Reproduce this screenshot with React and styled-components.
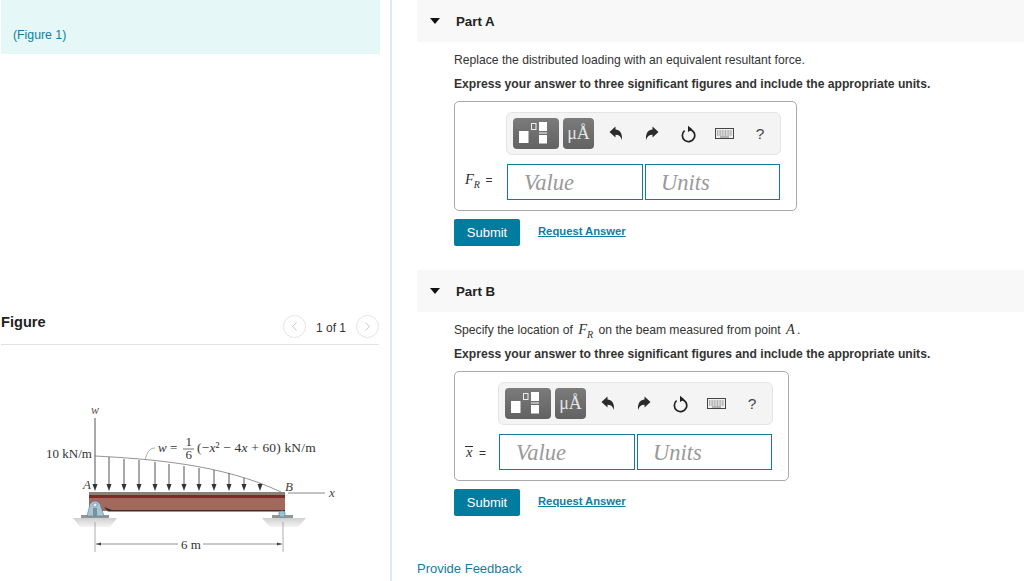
import styled, { createGlobalStyle } from "styled-components";
import { ChevronLeft, ChevronRight } from "lucide-react";

const GlobalStyle = createGlobalStyle`
  html, body {
    margin: 0;
    padding: 0;
    background: #fff;
    overflow: hidden;
  }
  body {
    font-family: "Liberation Sans", Arial, sans-serif;
    color: #222;
  }
`;

const arrowXs = [95, 109, 124, 139, 155, 169, 184, 199, 214, 229, 244, 260];
const arrowTops = [418, 457, 459, 460, 462, 464, 466, 468, 470, 473, 478, 483];

function BeamDiagram() {
  return (
    <DiagramSvg viewBox="0 390 340 170" width="340" height="170">
      <defs>
        <linearGradient id="ground" x1="0" y1="0" x2="0" y2="1">
          <stop offset="0" stopColor="#cfcfcf" />
          <stop offset="1" stopColor="#f4f4f4" />
        </linearGradient>
      </defs>
      <text x="91" y="414" fontSize="12" fontStyle="italic" fill="#555">w</text>
      <text x="46" y="458" fontSize="13" fill="#333">10 kN/m</text>
      <path d="M95 456 C150 459 222 464 281 492" fill="none" stroke="#777" strokeWidth="0.8" />
      <path d="M155 448 C149 448 147 453 145 460" fill="none" stroke="#888" strokeWidth="0.7" />
      <text x="158" y="452" fontSize="13" fill="#333">
        <tspan fontStyle="italic">w</tspan> =
      </text>
      <line x1="183" y1="449" x2="194" y2="449" stroke="#333" strokeWidth="0.7" />
      <text x="185.5" y="446" fontSize="13" fill="#333">1</text>
      <text x="185.5" y="459" fontSize="13" fill="#333">6</text>
      <text x="197" y="452" fontSize="13.5" letterSpacing="0.15" fill="#333">
        (−<tspan fontStyle="italic">x</tspan>² − 4<tspan fontStyle="italic">x</tspan> + 60) kN/m
      </text>
      {arrowXs.map((x, i) => (
        <g key={x}>
          <line x1={x} y1={arrowTops[i]} x2={x} y2="487" stroke="#555" strokeWidth="1" />
          <path d={`M${x - 2.5} 484 L${x + 2.5} 484 L${x} 491 Z`} fill="#333" />
        </g>
      ))}
      <text x="83" y="489" fontSize="13" fontStyle="italic" fill="#444">A</text>
      <text x="285" y="491" fontSize="13" fontStyle="italic" fill="#444">B</text>
      <line x1="288" y1="493" x2="325" y2="493" stroke="#888" strokeWidth="1" />
      <text x="329" y="497" fontSize="13" fontStyle="italic" fill="#444">x</text>

      <rect x="89" y="492" width="196" height="19" fill="#a2685c" />
      <rect x="89" y="492" width="196" height="3" fill="#8c8177" />
      <rect x="89" y="495" width="196" height="3" fill="#7c2b26" />
      <path d="M104 507 L112 510 H285 V511.5 H108 Z" fill="#3b2f2c" />

      <path d="M73 518 H117 L110 527 H80 Z" fill="url(#ground)" />
      <rect x="81" y="515" width="28" height="3" fill="#8f979b" />
      <path d="M87 516 L90 504 Q95 498 100 504 L104 516 Z" fill="#a5c6d6" stroke="#5a7f90" strokeWidth="0.6" />
      <circle cx="95" cy="505" r="2" fill="#e8eef0" stroke="#667" strokeWidth="0.5" />
      <rect x="93" y="508" width="4" height="8" fill="#7f8f98" />

      <path d="M262 518 H306 L298 527 H270 Z" fill="url(#ground)" />
      <rect x="272" y="515" width="21" height="3" fill="#8f979b" />
      <circle cx="282" cy="514" r="3.2" fill="#9cc3d3" stroke="#5a7f90" strokeWidth="0.6" />

      <line x1="95" y1="522" x2="95" y2="552" stroke="#999" strokeWidth="0.8" />
      <line x1="283" y1="522" x2="283" y2="552" stroke="#999" strokeWidth="0.8" />
      <line x1="96" y1="544" x2="178" y2="544" stroke="#777" strokeWidth="0.8" />
      <line x1="203" y1="544" x2="282" y2="544" stroke="#777" strokeWidth="0.8" />
      <path d="M96 544 l5 -1.5 v3 Z M282 544 l-5 -1.5 v3 Z" fill="#444" />
      <text x="181" y="549" fontSize="13" fill="#333">6 m</text>
    </DiagramSvg>
  );
}

function TemplateIcon() {
  return (
    <svg width="46" height="31" viewBox="0 0 46 31">
      <rect x="6" y="13" width="9.5" height="12" fill="#fff" />
      <rect x="18.5" y="5.5" width="4.5" height="6" fill="none" stroke="#eee" strokeWidth="1" />
      <rect x="26" y="4" width="8" height="9" fill="#fff" />
      <rect x="26" y="14.5" width="8" height="1" fill="#fff" />
      <rect x="26" y="17" width="8" height="8.5" fill="#fff" />
    </svg>
  );
}

function ArrowIcon({ flip }) {
  return (
    <svg width="14" height="15" viewBox="0 0 14 15" style={{ transform: flip ? "scaleX(-1)" : "none" }}>
      <path d="M0.5 6 L6.5 0.5 V3.6 C10.5 3.6 13.5 7 13 14 C11.8 10.6 10 8.7 6.5 8.7 V11.5 Z" fill="#2b2b2b" />
    </svg>
  );
}

function ResetIcon() {
  return (
    <svg width="17" height="18" viewBox="0 0 17 18">
      <path d="M9.6 4.3 A6.2 6.2 0 1 1 4.6 5.6" fill="none" stroke="#222" strokeWidth="1.7" />
      <path d="M8 0.8 L12.4 4.2 L8 7 Z" fill="#222" />
    </svg>
  );
}

function KeyboardIcon() {
  return (
    <svg width="19" height="11" viewBox="0 0 19 11">
      <rect x="0.5" y="0.5" width="18" height="10" fill="#efefef" stroke="#444" strokeWidth="1" />
      <path d="M2 3 H17 M2 5 H17 M2 7 H17" stroke="#777" strokeWidth="1" strokeDasharray="1 0.6" />
      <path d="M5 9 H14" stroke="#777" strokeWidth="1" />
    </svg>
  );
}

function AnswerBox({ label }) {
  return (
    <Box>
      <LabelCell>{label}</LabelCell>
      <Fields>
        <Toolbar>
          <DarkButton $width={46}>
            <TemplateIcon />
          </DarkButton>
          <DarkButton $width={31}>
            <UnitGlyph>μÅ</UnitGlyph>
          </DarkButton>
          <Tools>
            <ToolSlot><ArrowIcon /></ToolSlot>
            <ToolSlot><ArrowIcon flip /></ToolSlot>
            <ToolSlot><ResetIcon /></ToolSlot>
            <ToolSlot><KeyboardIcon /></ToolSlot>
            <ToolSlot><Help>?</Help></ToolSlot>
          </Tools>
        </Toolbar>
        <Inputs>
          <FieldInput $width={136} placeholder="Value" readOnly />
          <FieldInput $width={135} $indent={15} placeholder="Units" readOnly />
        </Inputs>
      </Fields>
    </Box>
  );
}

function Part({ name, children, label }) {
  return (
    <section>
      <PartHeader>
        <Caret />
        {name}
      </PartHeader>
      <PartBody>
        {children}
        <Instruction>Express your answer to three significant figures and include the appropriate units.</Instruction>
        <AnswerBox label={label} />
        <Actions>
          <SubmitButton>Submit</SubmitButton>
          <RequestLink href="#">Request Answer</RequestLink>
        </Actions>
      </PartBody>
    </section>
  );
}

export default function App() {
  return (
    <Page>
      <GlobalStyle />
      <LeftColumn>
        <FigureLinkBar>
          <FigureLink href="#">(Figure 1)</FigureLink>
        </FigureLinkBar>
        <FigureHeader>
          <FigureTitle>Figure</FigureTitle>
          <Pager>
            <PagerButton><ChevronLeft size={15} strokeWidth={1.2} /></PagerButton>
            <PagerText>1 of 1</PagerText>
            <PagerButton><ChevronRight size={15} strokeWidth={1.2} /></PagerButton>
          </Pager>
        </FigureHeader>
        <BeamDiagram />
      </LeftColumn>
      <RightColumn>
        <Part
          name="Part A"
          label={
            <LabelFormula $width={41} $lift={5}>
              <i>F<sub>R</sub></i> <span>=</span>
            </LabelFormula>
          }
        >
          <Prompt>Replace the distributed loading with an equivalent resultant force.</Prompt>
        </Part>
        <PartGap />
        <Part
          name="Part B"
          label={
            <LabelFormula $width={33} $lift={0}>
              <Overline>x</Overline> <span>=</span>
            </LabelFormula>
          }
        >
          <Prompt>
            Specify the location of <Formula><i>F<sub>R</sub></i></Formula> on the beam measured from point{" "}
            <Formula><i>A</i></Formula>.
          </Prompt>
        </Part>
        <Feedback href="#">Provide Feedback</Feedback>
      </RightColumn>
    </Page>
  );
}

const Page = styled.div`
  display: grid;
  grid-template-columns: 392px 632px;
  width: 1024px;
  height: 581px;
  overflow: hidden;
`;

const LeftColumn = styled.div`
  border-right: 2px solid #dfe9f2;
  padding-left: 1px;
  box-sizing: border-box;
`;

const FigureLinkBar = styled.div`
  width: 379px;
  height: 54px;
  background: #e5f7f7;
  padding: 27px 0 0 12px;
  box-sizing: border-box;
  line-height: 14px;
`;

const FigureLink = styled.a`
  color: #0f7ea3;
  font-size: 12.3px;
  text-decoration: none;
`;

const FigureHeader = styled.div`
  width: 378px;
  height: 42px;
  margin-top: 248px;
  border-bottom: 1px solid #e2e2e2;
  display: flex;
  align-items: center;
  justify-content: space-between;
`;

const FigureTitle = styled.h3`
  margin: -2px 0 0;
  font-size: 14.6px;
  font-weight: 700;
  color: #222;
`;

const Pager = styled.div`
  display: flex;
  align-items: center;
  gap: 10px;
  margin-top: 6px;
`;

const PagerText = styled.span`
  font-size: 12px;
  color: #333;
  margin-top: 3px;
`;

const PagerButton = styled.span`
  display: flex;
  align-items: center;
  justify-content: center;
  width: 23px;
  height: 23px;
  border: 1px solid #e4e4e4;
  border-radius: 50%;
  color: #b5b5b5;
  box-sizing: border-box;
`;

const DiagramSvg = styled.svg`
  display: block;
  margin: 45px 0 0 -1px;
  font-family: "Liberation Serif", "Times New Roman", serif;
`;

const RightColumn = styled.div`
  padding-left: 25px;
`;

const PartHeader = styled.div`
  height: 42px;
  background: #f8f8f8;
  display: flex;
  align-items: center;
  font-size: 13.3px;
  font-weight: 700;
  color: #222;
  padding-left: 13px;
`;

const Caret = styled.span`
  width: 0;
  height: 0;
  border-left: 5.5px solid transparent;
  border-right: 5.5px solid transparent;
  border-top: 6px solid #111;
  margin-right: 16px;
`;

const PartBody = styled.div`
  padding-left: 37px;
`;

const PartGap = styled.div`
  height: 24px;
`;

const Prompt = styled.p`
  margin: 0;
  height: 24px;
  padding-top: 12px;
  font-size: 12.15px;
  line-height: 13px;
  color: #333;
  white-space: nowrap;
`;

const Instruction = styled.p`
  margin: 0;
  height: 23px;
  font-size: 12.15px;
  line-height: 13px;
  font-weight: 700;
  color: #333;
`;

const Box = styled.div`
  display: inline-flex;
  height: 110px;
  box-sizing: border-box;
  border: 1px solid #aaa;
  border-radius: 5px;
  padding: 10px 15px 10px 10px;
  vertical-align: top;
`;

const LabelCell = styled.div`
  display: flex;
  align-items: center;
  align-self: flex-end;
  height: 36px;
  white-space: nowrap;
`;

const Formula = styled.span`
  font-family: "Liberation Serif", "Times New Roman", serif;
  font-size: 14.5px;
  line-height: 0;
  color: #333;
  margin: 0 2px;
  & sub {
    font-size: 10px;
    line-height: 0;
  }
`;

const LabelFormula = styled(Formula)`
  display: block;
  width: ${({ $width }) => $width}px;
  line-height: 16px;
  margin: 0 0 ${({ $lift }) => $lift}px;
  & > span {
    font-family: "Liberation Sans", Arial, sans-serif;
    font-size: 12px;
    margin-left: 2px;
  }
`;

const Overline = styled.i`
  display: inline-block;
  border-top: 1px solid #333;
  line-height: 11px;
  padding: 0 1px;
`;

const Fields = styled.div`
  display: flex;
  flex-direction: column;
  gap: 9px;
`;

const Toolbar = styled.div`
  display: flex;
  align-items: center;
  gap: 4px;
  width: 275px;
  height: 43px;
  box-sizing: border-box;
  background: #f4f4f4;
  border: 1px solid #e4e4e4;
  border-radius: 6px;
  padding-left: 6px;
`;

const DarkButton = styled.div`
  display: flex;
  align-items: center;
  justify-content: center;
  width: ${({ $width }) => $width}px;
  height: 31px;
  border-radius: 4px;
  background: linear-gradient(#7b7b7b, #626262);
`;

const UnitGlyph = styled.span`
  font-family: "Liberation Serif", "Times New Roman", serif;
  font-size: 18px;
  color: #e4e4e4;
`;

const Tools = styled.div`
  display: flex;
  align-items: center;
`;

const ToolSlot = styled.div`
  display: flex;
  justify-content: center;
  align-items: center;
  width: 36px;
`;

const Help = styled.span`
  font-size: 15.5px;
  color: #444;
`;

const Inputs = styled.div`
  display: flex;
  gap: 2px;
  margin-left: 1px;
`;

const FieldInput = styled.input`
  width: ${({ $width }) => $width}px;
  height: 36px;
  box-sizing: border-box;
  border: 1px solid #137a9b;
  border-radius: 0;
  padding: 1px ${({ $indent }) => $indent ?? 16}px 0;
  outline: none;
  font-family: "Liberation Serif", "Times New Roman", serif;
  font-style: italic;
  font-size: 22.5px;
  background: #fff;
  &::placeholder {
    color: #999;
    opacity: 1;
  }
`;

const Actions = styled.div`
  display: flex;
  align-items: center;
  gap: 18px;
  margin-top: 8px;
`;

const SubmitButton = styled.button`
  width: 66px;
  height: 27px;
  background: #007c9e;
  border: none;
  border-radius: 2px;
  color: #fff;
  font-family: "Liberation Sans", Arial, sans-serif;
  font-size: 13px;
  padding: 0;
`;

const RequestLink = styled.a`
  color: #0f7ea3;
  font-size: 11.25px;
  font-weight: 700;
  text-decoration: underline;
  margin-bottom: 3px;
`;

const Feedback = styled.a`
  display: block;
  margin-top: 45px;
  color: #0f7ea3;
  font-size: 13px;
  text-decoration: none;
`;
